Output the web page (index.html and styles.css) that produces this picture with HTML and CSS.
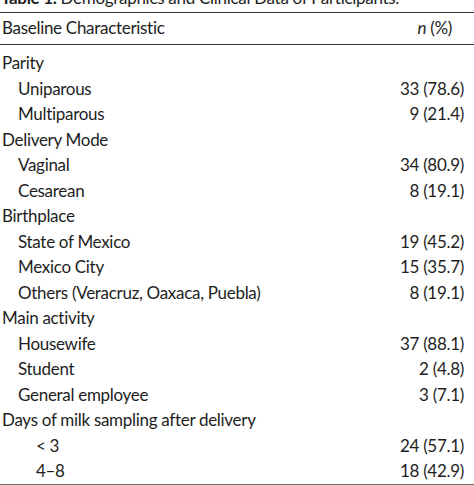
FILE: index.html
```html
<!DOCTYPE html>
<html>
<head>
<meta charset="utf-8">
<link rel="stylesheet" href="styles.css">
</head>
<body>
<div class="page">
  <div class="caption"><b>Table 1.</b> Demographics and Clinical Data of Participants.</div>
  <table class="data">
    <thead>
      <tr><th class="label">Baseline Characteristic</th><th class="val"><i>n</i> (%)</th></tr>
    </thead>
    <tbody>
      <tr class="first"><td class="cat">Parity</td><td></td></tr>
      <tr><td class="sub">Uniparous</td><td class="num">33 (78.6)</td></tr>
      <tr><td class="sub">Multiparous</td><td class="num">9 (21.4)</td></tr>
      <tr><td class="cat">Delivery Mode</td><td></td></tr>
      <tr><td class="sub">Vaginal</td><td class="num">34 (80.9)</td></tr>
      <tr><td class="sub">Cesarean</td><td class="num">8 (19.1)</td></tr>
      <tr><td class="cat">Birthplace</td><td></td></tr>
      <tr><td class="sub">State of Mexico</td><td class="num">19 (45.2)</td></tr>
      <tr><td class="sub">Mexico City</td><td class="num">15 (35.7)</td></tr>
      <tr><td class="sub">Others (Veracruz, Oaxaca, Puebla)</td><td class="num">8 (19.1)</td></tr>
      <tr><td class="cat">Main activity</td><td></td></tr>
      <tr><td class="sub">Housewife</td><td class="num">37 (88.1)</td></tr>
      <tr><td class="sub">Student</td><td class="num">2 (4.8)</td></tr>
      <tr><td class="sub">General employee</td><td class="num">3 (7.1)</td></tr>
      <tr><td class="cat">Days of milk sampling after delivery</td><td></td></tr>
      <tr><td class="sub2">&lt; 3</td><td class="num">24 (57.1)</td></tr>
      <tr class="last"><td class="sub2">4–8</td><td class="num">18 (42.9)</td></tr>
    </tbody>
  </table>
</div>
</body>
</html>
```
FILE: styles.css
```css
html, body {
  margin: 0;
  padding: 0;
  background: #ffffff;
}
body {
  font-family: Lato, "Liberation Sans", sans-serif;
  font-size: 17px;
  letter-spacing: -0.3px;
  color: #1e1e1e;
  overflow: hidden;
}
.page {
  width: 474px;
  margin-top: -11px;
}
.caption {
  line-height: 17px;
  height: 17px;
  padding-left: 1px;
  margin-bottom: 6px;
  white-space: nowrap;
}
.caption b {
  font-weight: 700;
}
.data {
  width: 474px;
  border-collapse: collapse;
}
.data thead tr {
  border-top: 1px solid #333333;
  border-bottom: 1px solid #333333;
}
.data th {
  font-weight: 400;
  height: 28px;
  line-height: 25px;
  padding: 2px 0 1px;
  text-align: left;
  vertical-align: top;
}
.data th.label {
  padding-left: 2px;
}
.data th.val {
  text-align: right;
  padding-right: 22px;
}
.data td {
  padding: 0;
  line-height: 25.5px;
  height: 25.5px;
  white-space: nowrap;
}
.data tr.first td {
  padding-top: 5px;
}
.data tr.last {
  border-bottom: 4px solid #707070;
}
.cat {
  padding-left: 2px !important;
}
.sub {
  padding-left: 18px !important;
}
.sub2 {
  padding-left: 36px !important;
}
.num {
  text-align: right;
  padding-right: 10px !important;
}
```
